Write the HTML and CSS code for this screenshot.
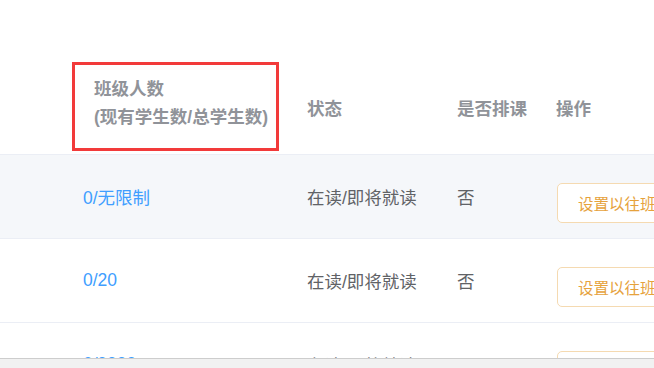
FILE: index.html
```html
<!doctype html>
<html>
<head>
  <meta charset="utf-8">
  <link rel="stylesheet" href="styles.css">
</head>
<body>
  <div class="page">
    <div class="table-wrap">
      <div class="table">
        <div class="row head">
          <div class="cell lead"></div>
          <div class="cell"><div class="th-count">班级人数<br>(现有学生数/总学生数)</div></div>
          <div class="cell">状态</div>
          <div class="cell">是否排课</div>
          <div class="cell">操作</div>
        </div>

        <div class="row hover">
          <div class="cell lead"></div>
          <div class="cell count">0/无限制</div>
          <div class="cell">在读/即将就读</div>
          <div class="cell">否</div>
          <div class="cell"><button class="btn-warn">设置以往班级</button></div>
        </div>

        <div class="row">
          <div class="cell lead"></div>
          <div class="cell count">0/20</div>
          <div class="cell">在读/即将就读</div>
          <div class="cell">否</div>
          <div class="cell"><button class="btn-warn">设置以往班级</button></div>
        </div>

        <div class="row">
          <div class="cell lead"></div>
          <div class="cell count">0/9999</div>
          <div class="cell">在读/即将就读</div>
          <div class="cell">否</div>
          <div class="cell"><button class="btn-warn">设置以往班级</button></div>
        </div>
      </div>
      <!-- annotation box round the header cell -->
      <div class="mark"></div>
    </div>
    <div class="hbar"></div>
  </div>
</body>
</html>
```

FILE: styles.css
```css
html, body {
  margin: 0;
  height: 100%;
  overflow: hidden;
  background: #fff;
  font-family: "Liberation Sans", "Noto Sans CJK SC", sans-serif;
}
.page {
  display: flex;
  flex-direction: column;
  height: 368px;
}
.table-wrap {
  position: relative;
  height: 358px;
  overflow: hidden;
}
.table {
  width: 760px;
  padding-top: 60px;
}
.row {
  display: grid;
  grid-template-columns: 71px 224px 150px 99px 216px;
  height: 83px;
  border-bottom: 1px solid #ebeef5;
  font-size: 17.5px;
  color: #606266;
}
.row.hover {
  background: #f5f7fa;
}
.row.head {
  height: 94px;
  font-size: 17.5px;
  font-weight: bold;
  color: #909399;
}
.cell {
  display: flex;
  align-items: center;
  padding: 0 12px;
  white-space: nowrap;
}
.cell.lead {
  padding: 0;
}
.th-count {
  padding: 0 0 8px 11px;
  line-height: 28.5px;
}
.count {
  color: #409eff;
}
.btn-warn {
  margin: 12px 0 0 1px;
  height: 40px;
  padding: 0 20px;
  border: 1px solid #f5dab1;
  border-radius: 5px;
  background: #fff;
  color: #e6a23c;
  font-family: inherit;
  font-size: 15.5px;
  white-space: nowrap;
}
.mark {
  position: absolute;
  left: 72px;
  top: 62px;
  width: 201px;
  height: 83px;
  border: 3px solid #f23a3a;
}
.hbar {
  height: 9px;
  border-top: 1px solid #cdcdcd;
  background: #f1f1f1;
}
```
